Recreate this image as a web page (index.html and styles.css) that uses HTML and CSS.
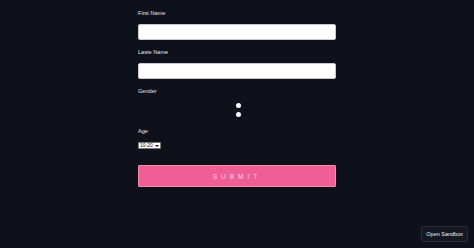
FILE: index.html
```html
<!DOCTYPE html>
<html>
<head>
<meta charset="utf-8">
<link rel="stylesheet" href="styles.css">
</head>
<body>
<form class="form">
  <label class="label">First Name</label>
  <input class="field" type="text">
  <label class="label">Laste Name</label>
  <input class="field" type="text">
  <label class="label">Gender</label>
  <div class="radios">
    <span class="dot"></span>
    <span class="dot"></span>
  </div>
  <label class="label">Age</label>
  <span class="select">10-20<span class="caret"></span></span>
  <button class="submit" type="button">SUBMIT</button>
</form>
<div class="sandbox">Open Sandbox</div>
</body>
</html>
```
FILE: styles.css
```css
html, body {
  margin: 0;
  padding: 0;
  height: 100%;
  background: #0e101a;
  font-family: "Liberation Sans", Arial, sans-serif;
  color: #e8e8ec;
}
body {
  position: relative;
  overflow: hidden;
}
.form {
  width: 198px;
  margin-left: 138px;
  padding-top: 9px;
  display: flex;
  flex-direction: column;
  align-items: stretch;
}
.label {
  font-size: 5.6px;
  line-height: 8px;
  height: 8px;
  margin-bottom: 7px;
  color: #e4e4ea;
}
.field {
  box-sizing: border-box;
  height: 16px;
  width: 198px;
  margin: 0 0 8px 0;
  border: 1px solid #c9c9d0;
  border-radius: 2px;
  background: #ffffff;
  padding: 0;
}
.radios {
  display: flex;
  flex-direction: column;
  align-items: center;
  gap: 4px;
  margin-top: 1px;
  margin-bottom: 10px;
  padding-left: 3px;
}
.dot {
  width: 5px;
  height: 5px;
  border-radius: 50%;
  background: #ffffff;
}
.select {
  align-self: flex-start;
  box-sizing: border-box;
  height: 7px;
  width: 23px;
  margin-top: 0;
  background: #ffffff;
  border: 1px solid #7a7a7a;
  border-radius: 1px;
  color: #111;
  font-size: 5px;
  line-height: 5px;
  padding-left: 1px;
  display: flex;
  align-items: center;
  gap: 1px;
}
.caret {
  width: 0;
  height: 0;
  border-left: 2.5px solid transparent;
  border-right: 2.5px solid transparent;
  border-top: 2.5px solid #111;
  margin-left: 1px;
}
.submit {
  margin-top: 16px;
  height: 22px;
  width: 198px;
  border: 1px solid #f58ab3;
  border-radius: 1px;
  background: #ef5e96;
  color: #fbd0e0;
  font-family: "Liberation Sans", Arial, sans-serif;
  font-size: 6.5px;
  letter-spacing: 4px;
  padding: 0;
}
.sandbox {
  position: absolute;
  right: 6px;
  bottom: 6px;
  padding: 3px 4px;
  font-size: 5.5px;
  line-height: 8px;
  color: #f0f0f4;
  background: #151821;
  border: 1px solid #2a2d38;
  border-radius: 2px;
}
```
